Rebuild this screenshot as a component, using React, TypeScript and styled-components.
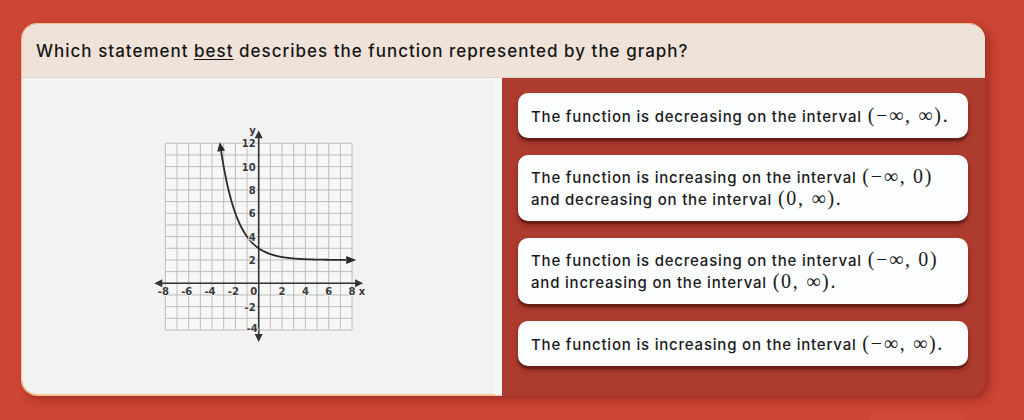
import React from "react";
import styled, { createGlobalStyle } from "styled-components";

const Global = createGlobalStyle`
  html, body { margin: 0; padding: 0; }
  body {
    background: #cc4535;
    width: 1024px;
    height: 420px;
    overflow: hidden;
    font-family: Inter, "Noto Sans", "Liberation Sans", sans-serif;
  }
`;

const Page = styled.div`
  display: flex;
  flex-direction: column;
  padding: 23px 0 0 21px;
  width: 1024px;
  height: 420px;
  box-sizing: border-box;
  overflow: hidden;
`;

const Card = styled.section`
  flex-shrink: 0;
  width: 964px;
  border-radius: 16px;
  border-top: 1px solid #f4c08a;
  border-left: 1px solid #f4c08a;
  box-shadow: 5px 4px 8px rgba(110, 25, 15, 0.45);
  overflow: hidden;
  box-sizing: border-box;
`;

const Header = styled.header`
  height: 54px;
  display: flex;
  align-items: center;
  padding-left: 14px;
  background: #efe2d9;
  border-bottom: 1px solid #dcd3cd;
  font-size: 17px;
  font-weight: 500;
  color: #161616;
  letter-spacing: 1px;
  box-sizing: border-box;
`;

const Underline = styled.span`
  text-decoration: underline;
  text-underline-offset: 2px;
`;

const Body = styled.div`
  display: grid;
  grid-template-columns: 480px 1fr;
  height: 318px;
`;

const GraphPanel = styled.div`
  background: #f2f2f2;
  display: flex;
  align-items: center;
  justify-content: center;
  border-right: 8px solid #f6f6f8;
  border-bottom: 2px solid #f3c592;
  border-bottom-left-radius: 16px;
`;

const Options = styled.div`
  background: #ad3b2e;
  display: flex;
  flex-direction: column;
  gap: 17px;
  padding: 15px 17px 0 16px;
`;

const Option = styled.button<{ $tall?: boolean }>`
  all: unset;
  display: flex;
  flex-direction: column;
  justify-content: center;
  height: ${(p) => (p.$tall ? "66px" : "45px")};
  padding: 0 13px;
  background: #fdfeff;
  border-radius: 10px;
  box-shadow: 0 3px 1px #6a1f16, 0 4px 5px rgba(60, 10, 5, 0.35);
  font-family: Inter, "Noto Sans", "Liberation Sans", sans-serif;
  font-size: 15px;
  font-weight: 500;
  letter-spacing: 0.8px;
  color: #1a1a1a;
  line-height: 21px;
  box-sizing: border-box;
  cursor: pointer;
`;

const Line = styled.span`
  display: block;
  white-space: nowrap;
`;

const MathText = styled.span`
  font-family: "Liberation Serif", "DejaVu Serif", serif;
  font-weight: 400;
  font-size: 20px;
  letter-spacing: 1.7px;
  margin-left: 1px;
`;

const Footer = styled.div`
  flex-shrink: 0;
  display: flex;
  justify-content: flex-end;
  padding: 16px 57px 0 0;
`;

const NextButton = styled.div`
  width: 100px;
  height: 24px;
  border-radius: 12px;
  background: #d04a3a;
`;

const sx = (x: number) => 115.7 + 11.67 * x;
const sy = (y: number) => 162.3 - 11.67 * y;
const f = (x: number) => 2 + Math.pow(0.5, x);

function arrowHead(px: number, py: number, dx: number, dy: number, len = 9, half = 4) {
  const n = Math.hypot(dx, dy);
  const ux = dx / n;
  const uy = dy / n;
  const tipX = px + ux * len;
  const tipY = py + uy * len;
  const nx = -uy;
  const ny = ux;
  return `${tipX},${tipY} ${px + nx * half},${py + ny * half} ${px - nx * half},${py - ny * half}`;
}

function Graph() {
  const xs: number[] = [];
  for (let i = -8; i <= 8; i++) xs.push(i);
  const ys: number[] = [];
  for (let i = -4; i <= 12; i++) ys.push(i);

  const x0 = -3.22;
  const x1 = 7.5;
  const pts: string[] = [];
  for (let x = x0; x <= x1 + 1e-6; x += 0.05) {
    pts.push(`${sx(x).toFixed(2)},${sy(f(x)).toFixed(2)}`);
  }
  const curve = "M" + pts.join(" L");

  const ax = sx(x0);
  const ay = sy(f(x0));
  const slope = -Math.log(2) * Math.pow(0.5, x0);
  const topArrow = arrowHead(ax, ay, -11.67, slope * 11.67, 9, 4);
  const rightArrow = arrowHead(sx(x1), sy(f(x1)), 1, 0, 10, 4);

  const labelStyle = {
    fontFamily: '"DejaVu Sans", "Liberation Sans", sans-serif',
    fontSize: 10,
    fontWeight: 700,
    fill: "#3a3a3a",
    stroke: "#f2f2f2",
    strokeWidth: 2,
    paintOrder: "stroke" as const,
  };

  const xLabels = [-8, -6, -4, -2, 2, 4, 6, 8];
  const yLabels = [2, 4, 6, 8, 10, 12];

  return (
    <svg width="230" height="230" viewBox="0 0 230 230">
      <rect x={sx(-8)} y={sy(12)} width={sx(8) - sx(-8)} height={sy(-4) - sy(12)} fill="#f7f7f7" />
      {xs.map((x) => (
        <line key={"gx" + x} x1={sx(x)} x2={sx(x)} y1={sy(12)} y2={sy(-4)} stroke="#bcbcbc" strokeWidth="1" />
      ))}
      {ys.map((y) => (
        <line key={"gy" + y} y1={sy(y)} y2={sy(y)} x1={sx(-8)} x2={sx(8)} stroke="#bcbcbc" strokeWidth="1" />
      ))}
      <line x1={sx(-8) - 6} x2={sx(8) + 6} y1={sy(0)} y2={sy(0)} stroke="#333" strokeWidth="1.6" />
      <line x1={sx(0)} x2={sx(0)} y1={sy(12) - 8} y2={sy(-4) + 8} stroke="#333" strokeWidth="1.6" />
      <polygon points={`${sx(-8) - 11},${sy(0)} ${sx(-8) - 3},${sy(0) - 4} ${sx(-8) - 3},${sy(0) + 4}`} fill="#333" />
      <polygon points={`${sx(8) + 11},${sy(0)} ${sx(8) + 3},${sy(0) - 4} ${sx(8) + 3},${sy(0) + 4}`} fill="#333" />
      <polygon points={`${sx(0)},${sy(12) - 13} ${sx(0) - 4},${sy(12) - 5} ${sx(0) + 4},${sy(12) - 5}`} fill="#333" />
      <polygon points={`${sx(0)},${sy(-4) + 12} ${sx(0) - 4},${sy(-4) + 4} ${sx(0) + 4},${sy(-4) + 4}`} fill="#333" />
      <path d={curve} fill="none" stroke="#2a2a2a" strokeWidth="1.8" strokeLinejoin="round" />
      <polygon points={topArrow} fill="#2a2a2a" />
      <polygon points={rightArrow} fill="#2a2a2a" />
      {xLabels.map((x) => (
        <text key={"lx" + x} x={sx(x) - (x < 0 ? 2 : 0)} y={sy(0) + 12} textAnchor="middle" style={labelStyle}>
          {x}
        </text>
      ))}
      <text x={sx(0) - 5} y={sy(0) + 12} textAnchor="middle" style={labelStyle}>0</text>
      <text x={sx(8) + 10} y={sy(0) + 12} textAnchor="middle" style={labelStyle}>x</text>
      {yLabels.map((y) => (
        <text key={"ly" + y} x={sx(0) - 3} y={sy(y) + 4} textAnchor="end" style={labelStyle}>
          {y}
        </text>
      ))}
      <text x={sx(0) - 3} y={sy(-2) + 4} textAnchor="end" style={labelStyle}>-2</text>
      <text x={sx(0) - 1} y={sy(-4) + 2} textAnchor="end" style={labelStyle}>-4</text>
      <text x={sx(0) - 3} y={sy(12) - 9} textAnchor="end" style={labelStyle}>y</text>
    </svg>
  );
}

export default function App() {
  return (
    <>
      <Global />
      <Page>
        <Card>
          <Header>
            <span>
              Which statement <Underline>best</Underline> describes the function represented by the graph?
            </span>
          </Header>
          <Body>
            <GraphPanel>
              <Graph />
            </GraphPanel>
            <Options>
              <Option>
                <Line>
                  The function is decreasing on the interval <MathText>(−∞, ∞).</MathText>
                </Line>
              </Option>
              <Option $tall>
                <Line>
                  The function is increasing on the interval <MathText>(−∞, 0)</MathText>
                </Line>
                <Line>
                  and decreasing on the interval <MathText>(0, ∞).</MathText>
                </Line>
              </Option>
              <Option $tall>
                <Line>
                  The function is decreasing on the interval <MathText>(−∞, 0)</MathText>
                </Line>
                <Line>
                  and increasing on the interval <MathText>(0, ∞).</MathText>
                </Line>
              </Option>
              <Option>
                <Line>
                  The function is increasing on the interval <MathText>(−∞, ∞).</MathText>
                </Line>
              </Option>
            </Options>
          </Body>
        </Card>
        <Footer>
          <NextButton />
        </Footer>
      </Page>
    </>
  );
}
